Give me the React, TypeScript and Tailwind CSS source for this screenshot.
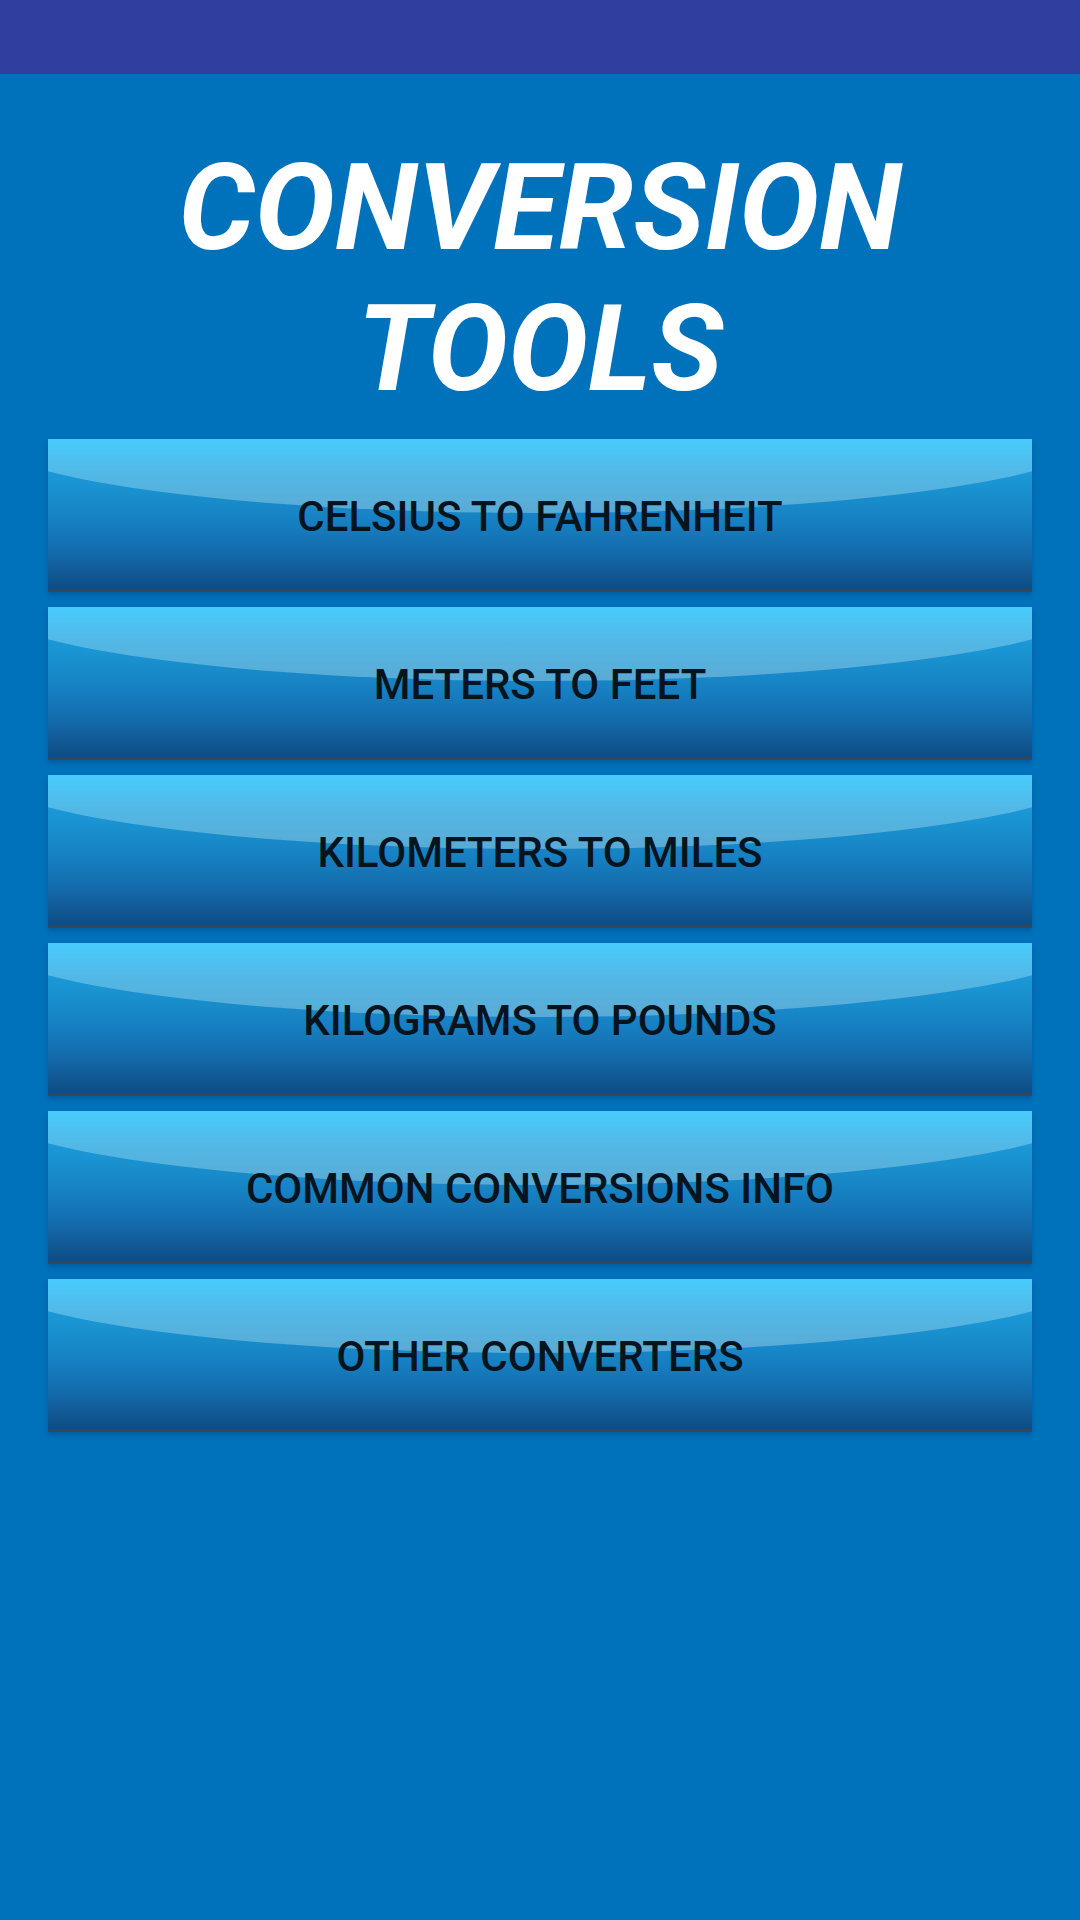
import React from "react";

const items = [
  "CELSIUS TO FAHRENHEIT",
  "METERS TO FEET",
  "KILOMETERS TO MILES",
  "KILOGRAMS TO POUNDS",
  "COMMON CONVERSIONS INFO",
  "OTHER CONVERTERS",
];

function GlossButton({ label }: { label: string }) {
  return (
    <button
      type="button"
      className="relative block w-full h-[153px] overflow-hidden border-b-[3px] border-[#3b4450] bg-[linear-gradient(to_bottom,#22a4e0_0%,#1a94d2_30%,#1680c2_55%,#1468a8_78%,#0e4c84_100%)] shadow-[0_3px_4px_rgba(0,60,110,0.35)]"
    >
      <div className="absolute left-[-68px] top-[-86px] w-[1120px] h-[160px] rounded-[50%] bg-[linear-gradient(to_bottom,#48cafc_55%,#52b8e6_75%,#5aaad4_100%)]" />
      <span className="relative flex h-full items-center justify-center pt-[5px] font-['Roboto',sans-serif] font-medium text-[42px] leading-none text-[#07141d]">
        {label}
      </span>
    </button>
  );
}

export default function App() {
  return (
    <div className="min-h-screen w-full bg-[#0071bb]">
      <div className="h-[74px] w-full bg-[#303f9f]" />
      <div className="px-[48px] pt-[64px]">
        <h1 className="text-center font-['Roboto',sans-serif] font-bold italic text-[120px] leading-[141px] text-white">
          CONVERSION
          <br />
          TOOLS
        </h1>
        <div className="mt-[19px] flex flex-col gap-[15px]">
          {items.map((it) => (
            <GlossButton key={it} label={it} />
          ))}
        </div>
      </div>
    </div>
  );
}
